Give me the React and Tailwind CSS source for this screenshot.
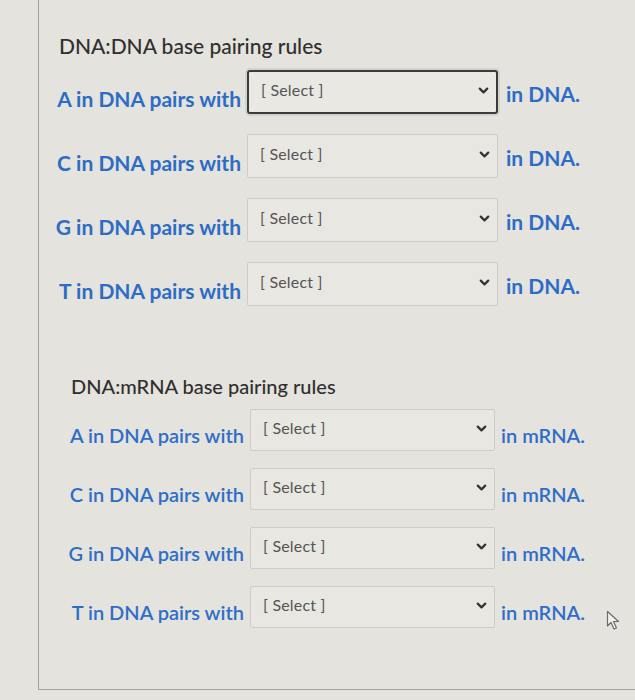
import React from 'react';
import { ChevronDown } from 'lucide-react';

const dnaRows = ['A', 'C', 'G', 'T'];

const Select = ({ focused, className }) => (
  <div
    className={
      'flex shrink-0 items-center justify-between pl-[12px] pr-[5px] ' +
      (focused
        ? 'rounded-[3px] border-2 border-[#3b3b3b] bg-[#e9e8e3] shadow-[0_0_0_2px_#d2d2ce] '
        : 'rounded-[2px] border border-[#cdcdc8] bg-[#e8e7e1] ') +
      className
    }
  >
    <span className="-mt-[4px] text-[16px] tracking-[0.2px] text-[#555]">[ Select ]</span>
    <ChevronDown size={15} strokeWidth={3.5} className="-mt-[3px] text-[#333]" />
  </div>
);

const App = () => {
  return (
    <div className="h-[700px] w-[635px] overflow-hidden bg-[#e4e3dd] font-['Lato',sans-serif]">
      <div className="relative ml-[38px] h-[690px] border-b border-l border-[#a3a39e]">
        {/* DNA:DNA */}
        <div className="pl-[12px] pt-[32px]">
          <h2 className="ml-[8px] h-[28px] whitespace-nowrap text-[21px] font-medium leading-[28px] text-[#2f2f2f]">DNA:DNA base pairing rules</h2>
          <div className="mt-[10px] flex flex-col gap-[20px]">
            {dnaRows.map((b, i) => (
              <div key={b} className="flex items-start">
                <div className="mt-[15px] w-[196px] shrink-0 whitespace-nowrap pr-[6px] text-right text-[21px] font-bold leading-[28px] text-[#2c6cc6]">
                  {b} in DNA pairs with
                </div>
                <Select focused={i === 0} className="h-[44px] w-[251px]" />
                <div className="ml-[8px] mt-[10px] whitespace-nowrap text-[21px] font-bold leading-[28px] text-[#2c6cc6]">in DNA.</div>
              </div>
            ))}
          </div>
        </div>

        {/* DNA:mRNA */}
        <div className="mt-[66px] pl-[26px]">
          <h2 className="ml-[6px] h-[28px] whitespace-nowrap text-[20px] font-medium leading-[28px] text-[#2f2f2f]">DNA:mRNA base pairing rules</h2>
          <div className="mt-[9px] flex flex-col gap-[17px]">
            {dnaRows.map((b) => (
              <div key={b} className="flex items-start">
                <div className="mt-[12px] w-[185px] shrink-0 whitespace-nowrap pr-[6px] text-right text-[20px] font-semibold leading-[28px] text-[#2f6ec8]">
                  {b} in DNA pairs with
                </div>
                <Select className="h-[42px] w-[245px]" />
                <div className="ml-[6px] mt-[12px] whitespace-nowrap text-[20px] font-semibold leading-[28px] text-[#2f6ec8]">in mRNA.</div>
              </div>
            ))}
          </div>
        </div>

        {/* mouse pointer */}
        <svg className="absolute left-[567px] top-[610px]" width="16" height="22" viewBox="0 0 16 22">
          <path d="M1.5 1.5 L1.5 16 L5 12.5 L8 19 L10.5 18 L7.5 11.5 L12.5 11.5 Z" fill="#f2f2ee" stroke="#6b6b6b" strokeWidth="1.2" strokeLinejoin="round" />
        </svg>
      </div>
    </div>
  );
};

export default App;
